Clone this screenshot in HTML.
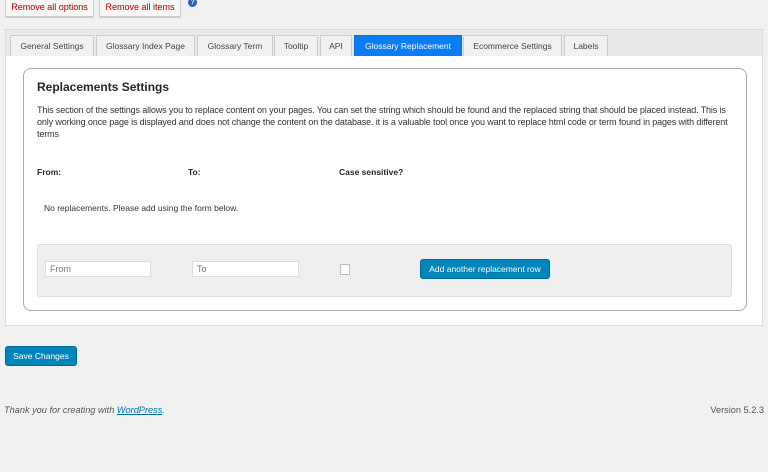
<!DOCTYPE html>
<html><head><style>
*{margin:0;padding:0;box-sizing:border-box}
body{width:768px;height:472px;background:#f1f1f1;font-family:"Liberation Sans",Arial,sans-serif;position:relative;overflow:hidden;color:#23282d}
.a{position:absolute;white-space:nowrap}
.btn{position:absolute;background:#f7f7f7;border:1px solid #ccc;border-radius:2px;color:#a00;font-size:9px;text-align:center;line-height:17px;box-shadow:0 1px 0 #ccc}
.tab{position:absolute;top:35px;height:21px;background:#f1f1f1;border:1px solid #ccc;border-bottom:none;font-size:8.5px;color:#444;text-align:center;line-height:20px}
.inp{position:absolute;background:#fff;border:1px solid #ddd;font-size:9px;color:#777;line-height:14px;padding-left:4px;height:16px}
.blue{position:absolute;background:#0085ba;border:1px solid #006799;border-radius:3px;color:#fff;font-size:8.5px;text-align:center}
</style></head><body>
<div class="btn" style="left:5px;top:-2px;width:89px;height:19px">Remove all options</div>
<div class="btn" style="left:99px;top:-2px;width:82px;height:19px">Remove all items</div>
<div class="a" style="left:188px;top:-2px;width:9px;height:9px;border-radius:50%;background:#2a62b0;color:#fff;font-size:7px;font-weight:bold;text-align:center;line-height:9px">?</div>

<div class="a" style="left:5px;top:29px;width:758px;height:297px;background:#fff;border:1px solid #ddd"></div>
<div class="a" style="left:6px;top:30px;width:756px;height:26px;background:#e9e9e9"></div>
<div class="tab" style="left:10px;width:84px">General Settings</div>
<div class="tab" style="left:96px;width:99px">Glossary Index Page</div>
<div class="tab" style="left:197px;width:76px">Glossary Term</div>
<div class="tab" style="left:274px;width:44px">Tooltip</div>
<div class="tab" style="left:320px;width:32px">API</div>
<div class="tab" style="left:354px;width:108px;background:#0a7cf5;border-color:#0a6ee0;color:#fff">Glossary Replacement</div>
<div class="tab" style="left:463px;width:99px">Ecommerce Settings</div>
<div class="tab" style="left:564px;width:44px">Labels</div>

<div class="a" style="left:23px;top:68px;width:724px;height:243px;border:1px solid #aaa;border-radius:8px;background:#fff"></div>
<div class="a" style="left:37px;top:80px;font-size:12px;font-weight:bold;color:#23282d">Replacements Settings</div>
<div class="a" style="left:37px;top:104px;font-size:9px;line-height:12px;color:#333;letter-spacing:-0.13px">This section of the settings allows you to replace content on your pages. You can set the string which should be found and the replaced string that should be placed instead. This is<br>only working once page is displayed and does not change the content on the database. it is a valuable tool once you want to replace html code or term found in pages with different<br>terms</div>
<div class="a" style="left:37px;top:167px;font-size:8.5px;font-weight:bold">From:</div>
<div class="a" style="left:188px;top:167px;font-size:8.5px;font-weight:bold">To:</div>
<div class="a" style="left:339px;top:167px;font-size:8.5px;font-weight:bold">Case sensitive?</div>
<div class="a" style="left:44px;top:203px;font-size:8.5px;color:#333">No replacements. Please add using the form below.</div>

<div class="a" style="left:37px;top:244px;width:695px;height:53px;background:#eee;border:1px solid #ddd;border-radius:3px"></div>
<div class="inp" style="left:45px;top:261px;width:106px">From</div>
<div class="inp" style="left:192px;top:261px;width:107px">To</div>
<div class="a" style="left:340px;top:264px;width:10px;height:11px;background:#fff;border:1px solid #bbb"></div>
<div class="blue" style="left:420px;top:259px;width:130px;height:20px;line-height:18px">Add another replacement row</div>

<div class="blue" style="left:5px;top:346px;width:72px;height:20px;line-height:18px">Save Changes</div>
<div class="a" style="left:4px;top:405px;font-size:9.2px;font-style:italic;color:#555">Thank you for creating with <span style="color:#0073aa;text-decoration:underline">WordPress</span>.</div>
<div class="a" style="right:4px;top:405px;font-size:9.2px;color:#555">Version 5.2.3</div>
</body></html>
